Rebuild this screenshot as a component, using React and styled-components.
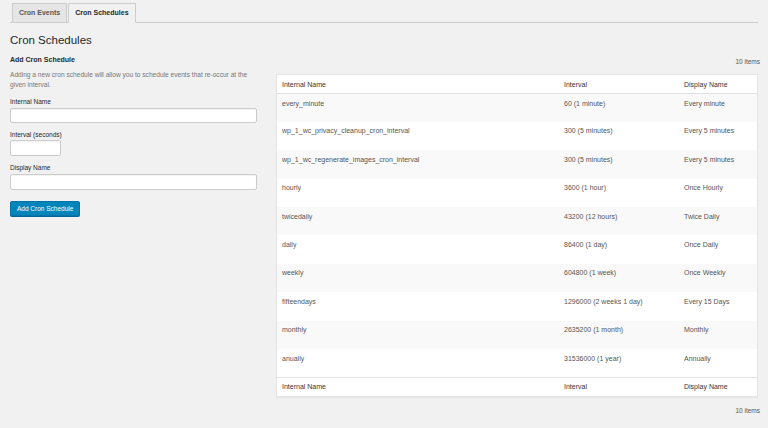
import React from "react"
import styled, { createGlobalStyle } from "styled-components"

const GlobalStyle = createGlobalStyle`
    body {
        margin: 0;
        background: #f1f1f1;
        font-family: "Liberation Sans", Arial, sans-serif;
        color: #444;
    }
`

const Page = styled.div`
    padding: 3px 10px 0 10px;
`

const TabBar = styled.nav`
    display: flex;
    border-bottom: 1px solid #ccc;
    padding-left: 2px;
    gap: 1px;
`

const Tab = styled.a`
    display: block;
    height: 18px;
    line-height: 18px;
    padding: 0 6px;
    margin-bottom: -1px;
    font-size: 7px;
    font-weight: bold;
    color: ${p => (p.$active ? "#23282d" : "#555")};
    background: ${p => (p.$active ? "#f1f1f1" : "#e5e5e5")};
    border: 1px solid #ccc;
    border-bottom-color: ${p => (p.$active ? "#f1f1f1" : "#ccc")};
`

const Title = styled.h1`
    margin: 10px 0 8px;
    font-size: 11.5px;
    line-height: 14px;
    font-weight: normal;
    color: #23282d;
`

const Columns = styled.div`
    display: flex;
    gap: 19px;
    align-items: flex-start;
`

const FormColumn = styled.div`
    width: 247px;
    flex-shrink: 0;
`

const SubTitle = styled.h2`
    margin: 0;
    font-size: 7px;
    line-height: 10px;
    font-weight: bold;
    color: #23282d;
`

const Description = styled.p`
    margin: 5px 0 7px;
    font-size: 6.6px;
    line-height: 10px;
    color: #777;
`

const Field = styled.div`
    display: flex;
    flex-direction: column;
    align-items: flex-start;
    margin-bottom: 7px;
`

const Label = styled.label`
    font-size: 6.5px;
    line-height: 9px;
    color: #23282d;
    margin-bottom: 1.5px;
`

const Input = styled.input`
    box-sizing: border-box;
    width: ${p => p.$width || "100%"};
    height: ${p => p.$height || "15px"};
    background: #fff;
    border: 1px solid #ccc;
    border-radius: 2px;
    box-shadow: inset 0 1px 1px rgba(0, 0, 0, 0.05);
    padding: 0 3px;
    font-size: 7px;
    outline: none;
`

const Button = styled.button`
    margin-top: -1px;
    height: 15px;
    padding: 0 6px;
    font-family: inherit;
    font-size: 6.5px;
    color: #fff;
    background: #0085ba;
    border: 1px solid #0073aa;
    border-radius: 2px;
    box-shadow: 0 1px 0 #006799;
`

const TableColumn = styled.div`
    flex: 1;
    display: flex;
    flex-direction: column;
`

const Count = styled.div`
    align-self: flex-end;
    margin-top: ${p => p.$top || "0"};
    margin-bottom: ${p => p.$bottom || "0"};
    margin-right: -2px;
    font-size: 6.5px;
    line-height: 9px;
    color: #555;
`

const Table = styled.table`
    width: 100%;
    border-collapse: collapse;
    background: #fff;
    border: 1px solid #e5e5e5;
    box-shadow: 0 1px 1px rgba(0, 0, 0, 0.04);
    table-layout: fixed;
    font-size: 7px;
`

const HeadCell = styled.th`
    width: ${p => p.$width || "auto"};
    height: 18px;
    padding: 0 5px;
    text-align: left;
    font-weight: normal;
    color: #32373c;
    border-bottom: ${p => (p.$foot ? "none" : "1px solid #e1e1e1")};
    border-top: ${p => (p.$foot ? "1px solid #e1e1e1" : "none")};
`

const Row = styled.tr`
    background: ${p => (p.$striped ? "#f9f9f9" : "#fff")};
`

const Cell = styled.td`
    height: 28.4px;
    box-sizing: border-box;
    padding: 4.5px 5px 0;
    vertical-align: top;
    line-height: 9px;
    color: #555;
`

const schedules = [
    ["every_minute", "60 (1 minute)", "Every minute"],
    ["wp_1_wc_privacy_cleanup_cron_interval", "300 (5 minutes)", "Every 5 minutes"],
    ["wp_1_wc_regenerate_images_cron_interval", "300 (5 minutes)", "Every 5 minutes"],
    ["hourly", "3600 (1 hour)", "Once Hourly"],
    ["twicedaily", "43200 (12 hours)", "Twice Daily"],
    ["daily", "86400 (1 day)", "Once Daily"],
    ["weekly", "604800 (1 week)", "Once Weekly"],
    ["fifteendays", "1296000 (2 weeks 1 day)", "Every 15 Days"],
    ["monthly", "2635200 (1 month)", "Monthly"],
    ["anually", "31536000 (1 year)", "Annually"],
]

const Columns3 = ({ foot }) => (
    <tr>
        <HeadCell $foot={foot} $width="272px">Internal Name</HeadCell>
        <HeadCell $foot={foot} $width="110px">Interval</HeadCell>
        <HeadCell $foot={foot}>Display Name</HeadCell>
    </tr>
)

const App = () => (
    <Page>
        <GlobalStyle />
        <TabBar>
            <Tab>Cron Events</Tab>
            <Tab $active>Cron Schedules</Tab>
        </TabBar>
        <Title>Cron Schedules</Title>
        <Columns>
            <FormColumn>
                <SubTitle>Add Cron Schedule</SubTitle>
                <Description>
                    Adding a new cron schedule will allow you to schedule events that re-occur at the given interval.
                </Description>
                <Field>
                    <Label>Internal Name</Label>
                    <Input type="text" />
                </Field>
                <Field>
                    <Label>Interval (seconds)</Label>
                    <Input type="number" $width="51px" $height="16px" />
                </Field>
                <Field>
                    <Label>Display Name</Label>
                    <Input type="text" $height="16px" />
                </Field>
                <Button>Add Cron Schedule</Button>
            </FormColumn>
            <TableColumn>
                <Count $top="1.5px" $bottom="8.5px">10 items</Count>
                <Table>
                    <thead>
                        <Columns3 />
                    </thead>
                    <tbody>
                        {schedules.map(([name, interval, display], i) => (
                            <Row key={name} $striped={i % 2 === 0}>
                                <Cell>{name}</Cell>
                                <Cell>{interval}</Cell>
                                <Cell>{display}</Cell>
                            </Row>
                        ))}
                    </tbody>
                    <tfoot>
                        <Columns3 foot />
                    </tfoot>
                </Table>
                <Count $top="9.5px">10 items</Count>
            </TableColumn>
        </Columns>
    </Page>
)

export default App
